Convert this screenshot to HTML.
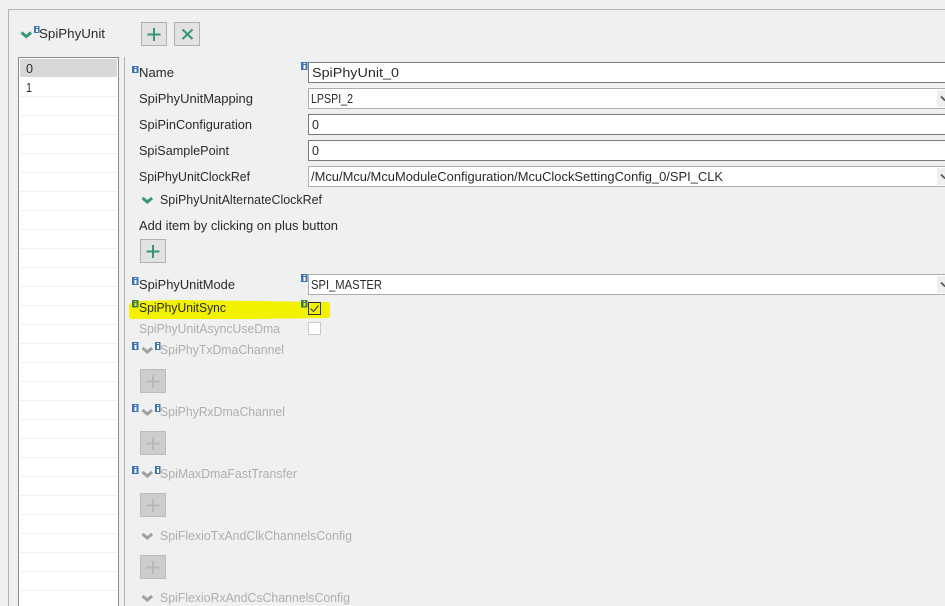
<!DOCTYPE html>
<html><head><meta charset="utf-8"><style>
html,body{margin:0;padding:0;background:#f0f0f0;width:945px;height:606px;overflow:hidden}
svg{display:block}
text{font-family:"Liberation Sans",sans-serif;font-size:13px;fill:#2a2a2a}
.d{fill:#aeaeae}
.i{fill:#3e76b0}
.w{fill:#fff}
</style></head><body>
<svg width="945" height="606" viewBox="0 0 945 606" xmlns="http://www.w3.org/2000/svg">
<rect width="945" height="606" fill="#f0f0f0"/>
<path d="M8.5 606V9.5H945" fill="none" stroke="#b4b4b4"/>
<path d="M124.5 57V606" stroke="#b0b0b0"/>
<!-- list -->
<rect x="18.5" y="57.5" width="100" height="560" fill="#fff" stroke="#8a8d90"/>
<rect x="20" y="59" width="97" height="18" fill="#d8d8d8"/>
<path stroke="#f0f0f0" d="M20 96.5H117M20 115.5H117M20 134.5H117M20 153.5H117M20 172.5H117M20 191.5H117M20 210.5H117M20 229.5H117M20 248.5H117M20 267.5H117M20 286.5H117M20 305.5H117M20 324.5H117M20 343.5H117M20 362.5H117M20 381.5H117M20 400.5H117M20 419.5H117M20 438.5H117M20 457.5H117M20 476.5H117M20 495.5H117M20 514.5H117M20 533.5H117M20 552.5H117M20 571.5H117M20 590.5H117"/>
<text x="26" y="73" textLength="7" lengthAdjust="spacingAndGlyphs">0</text>
<text x="26" y="92" textLength="6" lengthAdjust="spacingAndGlyphs">1</text>
<!-- header -->
<path d="M21.5 32.500l4.800 4 4.800-4" fill="none" stroke="#35967c" stroke-width="3"/>
<text x="39" y="38" textLength="66" lengthAdjust="spacingAndGlyphs">SpiPhyUnit</text>
<rect x="141.500" y="22.500" width="25" height="23" fill="#e2e2e2" stroke="#b0b0b0"/>
<path d="M154 28v13M147.500 34.500h13" stroke="#35967c" stroke-width="2"/>
<rect x="174.500" y="22.500" width="25" height="23" fill="#e2e2e2" stroke="#b0b0b0"/>
<path d="M182.500 29.500l10 9.500M192.500 29.500l-10 9.500" stroke="#35967c" stroke-width="2"/>
<!-- info icons -->
<g class="i">
<rect x="34" y="26" width="5.500" height="7"/>
<rect x="132" y="66" width="6.500" height="7"/>
<rect x="301" y="62" width="6.500" height="8"/>
<rect x="132" y="277" width="6.500" height="8"/>
<rect x="301" y="274" width="6.500" height="8"/>
<rect x="132" y="342" width="6.500" height="8"/>
<rect x="155" y="342" width="5.500" height="8"/>
<rect x="132" y="404" width="6.500" height="8"/>
<rect x="155" y="404" width="5.500" height="8"/>
<rect x="132" y="466" width="6.500" height="8"/>
<rect x="155" y="466" width="5.500" height="8"/>
</g>
<g class="w">
<rect x="36" y="27" width="2" height="1"/><rect x="36" y="29" width="2" height="3"/>
<rect x="134.500" y="67" width="2" height="1"/><rect x="134.500" y="69" width="2" height="3"/>
<rect x="303.500" y="63" width="2" height="1"/><rect x="303.500" y="65" width="2" height="4"/>
<rect x="134.500" y="278" width="2" height="1"/><rect x="134.500" y="280" width="2" height="4"/>
<rect x="303.500" y="275" width="2" height="1"/><rect x="303.500" y="277" width="2" height="4"/>
<rect x="134.500" y="343" width="2" height="1"/><rect x="134.500" y="345" width="2" height="4"/>
<rect x="157" y="343" width="2" height="1"/><rect x="157" y="345" width="2" height="4"/>
<rect x="134.500" y="405" width="2" height="1"/><rect x="134.500" y="407" width="2" height="4"/>
<rect x="157" y="405" width="2" height="1"/><rect x="157" y="407" width="2" height="4"/>
<rect x="134.500" y="467" width="2" height="1"/><rect x="134.500" y="469" width="2" height="4"/>
<rect x="157" y="467" width="2" height="1"/><rect x="157" y="469" width="2" height="4"/>
</g>
<!-- highlight -->
<path d="M129 306Q130 302 136 301L180 300L328 302Q330 303 330 306L330 316Q330 318 327 318L250 319L134 319Q129 319 129 316Z" fill="#f1f100"/>
<g fill="#3f7a5a">
<rect x="132" y="300" width="6.500" height="7.500"/>
<rect x="301" y="300" width="6.500" height="7.500"/>
</g>
<g fill="#f1f100">
<rect x="134.500" y="301" width="2" height="1"/><rect x="134.500" y="303" width="2" height="3"/>
<rect x="303.500" y="301" width="2" height="1"/><rect x="303.500" y="303" width="2" height="3"/>
</g>
<!-- fields -->
<g fill="#fff">
<rect x="308.500" y="62.500" width="640" height="20" stroke="#7a7a7a"/>
<rect x="308.500" y="88.500" width="640" height="20" stroke="#adadad"/>
<rect x="308.500" y="114.500" width="640" height="20" stroke="#7a7a7a"/>
<rect x="308.500" y="140.500" width="640" height="20" stroke="#7a7a7a"/>
<rect x="308.500" y="166.500" width="640" height="20" stroke="#adadad"/>
<rect x="308.500" y="274.500" width="640" height="20" stroke="#adadad"/>
</g>
<g fill="#eee">
<rect x="937" y="90" width="8" height="17"/>
<rect x="937" y="168" width="8" height="17"/>
<rect x="937" y="276" width="8" height="17"/>
</g>
<g fill="none" stroke="#555" stroke-width="1.800">
<path d="M941 96.500l4 4"/>
<path d="M941 174.500l4 4"/>
<path d="M941 282.500l4 4"/>
</g>
<!-- labels -->
<text x="139" y="77" textLength="35" lengthAdjust="spacingAndGlyphs">Name</text>
<text x="139" y="103" textLength="114" lengthAdjust="spacingAndGlyphs">SpiPhyUnitMapping</text>
<text x="139" y="129" textLength="113" lengthAdjust="spacingAndGlyphs">SpiPinConfiguration</text>
<text x="139" y="155" textLength="90" lengthAdjust="spacingAndGlyphs">SpiSamplePoint</text>
<text x="139" y="181" textLength="111" lengthAdjust="spacingAndGlyphs">SpiPhyUnitClockRef</text>
<text x="312" y="77" textLength="87" lengthAdjust="spacingAndGlyphs" style="font-size:12.5px">SpiPhyUnit_0</text>
<text x="311" y="103" textLength="42" lengthAdjust="spacingAndGlyphs">LPSPI_2</text>
<text x="312" y="129" textLength="7" lengthAdjust="spacingAndGlyphs">0</text>
<text x="312" y="155" textLength="7" lengthAdjust="spacingAndGlyphs">0</text>
<text x="311" y="181" textLength="412" lengthAdjust="spacingAndGlyphs">/Mcu/Mcu/McuModuleConfiguration/McuClockSettingConfig_0/SPI_CLK</text>
<path d="M142.500 198l4.800 4 4.800-4" fill="none" stroke="#35967c" stroke-width="3"/>
<text x="160" y="204" textLength="162" lengthAdjust="spacingAndGlyphs">SpiPhyUnitAlternateClockRef</text>
<text x="139" y="230" textLength="199" lengthAdjust="spacingAndGlyphs">Add item by clicking on plus button</text>
<rect x="140.500" y="239.500" width="25" height="23" fill="#e2e2e2" stroke="#b0b0b0"/>
<path d="M153 245v13M146.500 251.500h13" stroke="#35967c" stroke-width="2"/>
<text x="139" y="289" textLength="96" lengthAdjust="spacingAndGlyphs">SpiPhyUnitMode</text>
<text x="311" y="289" textLength="71" lengthAdjust="spacingAndGlyphs">SPI_MASTER</text>
<text x="139" y="312" textLength="87" lengthAdjust="spacingAndGlyphs">SpiPhyUnitSync</text>
<rect x="308.500" y="302.500" width="12" height="12" fill="none" stroke="#333"/>
<path d="M310.500 308.500l3 3 5-6" fill="none" stroke="#444" stroke-width="1.100"/>
<text class="d" x="139" y="333" textLength="141" lengthAdjust="spacingAndGlyphs">SpiPhyUnitAsyncUseDma</text>
<rect x="308.500" y="322.500" width="12" height="12" fill="#fff" stroke="#c8c8c8"/>
<!-- disabled sections -->
<g fill="none" stroke="#a0a0a0" stroke-width="3">
<path d="M142.500 348l4.800 4 4.800-4"/>
<path d="M142.500 410l4.800 4 4.800-4"/>
<path d="M142.500 472l4.800 4 4.800-4"/>
<path d="M142.500 534l4.800 4 4.800-4"/>
<path d="M142.500 596l4.800 4 4.800-4"/>
</g>
<text class="d" x="160" y="354" textLength="124" lengthAdjust="spacingAndGlyphs">SpiPhyTxDmaChannel</text>
<text class="d" x="160" y="416" textLength="125" lengthAdjust="spacingAndGlyphs">SpiPhyRxDmaChannel</text>
<text class="d" x="160" y="478" textLength="137" lengthAdjust="spacingAndGlyphs">SpiMaxDmaFastTransfer</text>
<text class="d" x="160" y="540" textLength="192" lengthAdjust="spacingAndGlyphs">SpiFlexioTxAndClkChannelsConfig</text>
<text class="d" x="160" y="602" textLength="190" lengthAdjust="spacingAndGlyphs">SpiFlexioRxAndCsChannelsConfig</text>
<g fill="#cdcdcd" stroke="#bcbcbc">
<rect x="140.500" y="369.500" width="25" height="23"/>
<rect x="140.500" y="431.500" width="25" height="23"/>
<rect x="140.500" y="493.500" width="25" height="23"/>
<rect x="140.500" y="555.500" width="25" height="23"/>
</g>
<path d="M153 375v13M146.500 381.500h13M153 437v13M146.500 443.500h13M153 499v13M146.500 505.500h13M153 561v13M146.500 567.500h13" stroke="#b8b8b8" stroke-width="2"/>
</svg>
</body></html>
